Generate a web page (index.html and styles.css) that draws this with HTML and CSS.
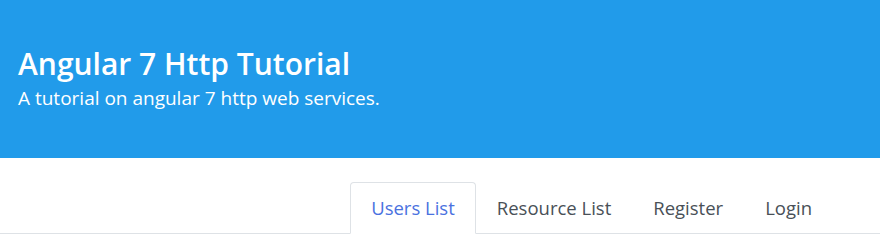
FILE: index.html
```html
<!DOCTYPE html>
<html>
<head>
<meta charset="utf-8">
<link rel="stylesheet" href="styles.css">
</head>
<body>
<header class="hero">
  <h1 class="hero-title">Angular 7 Http Tutorial</h1>
  <p class="hero-sub">A tutorial on angular 7 http web services.</p>
</header>
<nav class="tabs">
  <a class="tab active">Users List</a>
  <a class="tab">Resource List</a>
  <a class="tab">Register</a>
  <a class="tab">Login</a>
</nav>
</body>
</html>
```
FILE: styles.css
```css
* { box-sizing: border-box; }
html, body { margin: 0; padding: 0; }
body {
  font-family: "Open Sans", "Noto Sans", sans-serif;
  background: #fff;
  color: #495057;
}
.hero {
  background: #219bea;
  color: #fff;
  height: 158px;
  padding: 44px 18px 0;
}
.hero-title {
  margin: 0;
  font-size: 30px;
  font-weight: 600;
  line-height: 40px;
}
.hero-sub {
  margin: 1px 0 0;
  font-size: 19px;
  line-height: 26px;
}
.tabs {
  display: flex;
  justify-content: flex-end;
  margin-top: 24px;
  padding-right: 47px;
  border-bottom: 1px solid #dee2e6;
}
.tab {
  display: block;
  padding: 10px 20px;
  font-size: 18.5px;
  line-height: 30px;
  color: #495057;
  border: 1px solid transparent;
  border-top-left-radius: 4px;
  border-top-right-radius: 4px;
  margin-bottom: -1px;
}
.tab.active {
  color: #4a72e0;
  border-color: #dee2e6 #dee2e6 #fff;
  background: #fff;
}
```
